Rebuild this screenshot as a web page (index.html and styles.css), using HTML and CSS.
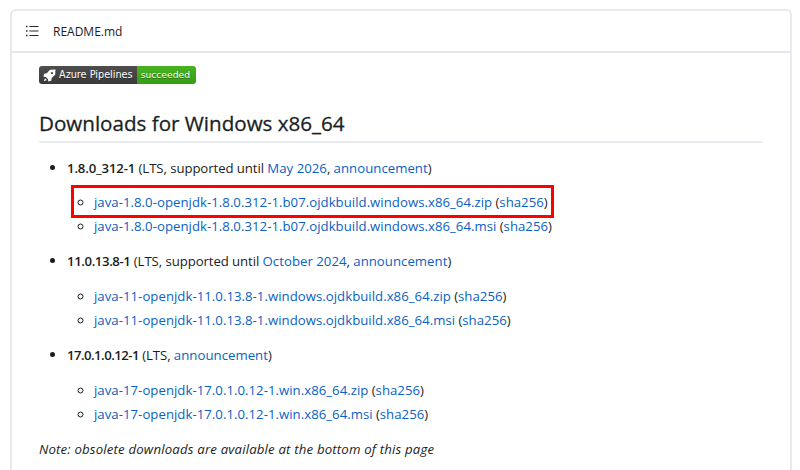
FILE: index.html
```html
<!DOCTYPE html>
<html lang="en">
<head>
<meta charset="utf-8">
<title>README.md</title>
<link rel="stylesheet" href="styles.css">
</head>
<body>
<div class="box">
  <div class="box-header">
    <svg class="toc" width="14" height="14" viewBox="0 0 14 14"><path d="M1 2.500h1.500M1 7h1.500M1 11.500h1.500" stroke="#24292f" stroke-width="1.400" fill="none"/><path d="M4.500 2.500h9M4.500 7h9M4.500 11.500h9" stroke="#24292f" stroke-width="1.200" fill="none"/></svg>
    <span class="fname">README.md</span>
  </div>
  <div class="readme">
    <div class="badge">
      <span class="badge-l"><svg class="rocket" width="13" height="13" viewBox="0 0 13 13"><path d="M12.500 .5 7 .8 3.800 4.300 1 4.800 .5 7.800l2.300.2 2.200 2.200.2 2.300 3-.7.5-2.700 3.500-3.300zM9 3a1.100 1.100 0 1 1 0 2.200A1.100 1.100 0 0 1 9 3zM2 9.200 .8 12.200l3-1.200z" fill="#fff" fill-rule="evenodd"/></svg>Azure Pipelines</span><span class="badge-r">succeeded</span>
    </div>
    <h2>Downloads for Windows x86_64</h2>
    <ul class="top">
      <li><strong class="ver-first">1.8.0_312-1</strong> (LTS, supported until <a href="#">May 2026</a>, <a href="#">announcement</a>)
        <ul class="tight">
          <li class="marked"><a href="#">java-1.8.0-openjdk-1.8.0.312-1.b07.ojdkbuild.windows.x86_64.zip</a> (<a href="#">sha256</a>)</li>
          <li><a href="#">java-1.8.0-openjdk-1.8.0.312-1.b07.ojdkbuild.windows.x86_64.msi</a> (<a href="#">sha256</a>)</li>
        </ul>
      </li>
      <li><strong class="ver">11.0.13.8-1</strong> (LTS, supported until <a href="#">October 2024</a>, <a href="#">announcement</a>)
        <ul>
          <li><a href="#">java-11-openjdk-11.0.13.8-1.windows.ojdkbuild.x86_64.zip</a> (<a href="#">sha256</a>)</li>
          <li><a href="#">java-11-openjdk-11.0.13.8-1.windows.ojdkbuild.x86_64.msi</a> (<a href="#">sha256</a>)</li>
        </ul>
      </li>
      <li><strong class="ver-last">17.0.1.0.12-1</strong> (LTS, <a href="#">announcement</a>)
        <ul>
          <li><a href="#">java-17-openjdk-17.0.1.0.12-1.win.x86_64.zip</a> (<a href="#">sha256</a>)</li>
          <li><a href="#">java-17-openjdk-17.0.1.0.12-1.win.x86_64.msi</a> (<a href="#">sha256</a>)</li>
        </ul>
      </li>
    </ul>
    <p class="note"><em>Note: obsolete downloads are available at the bottom of this page</em></p>
  </div>
</div>
</body>
</html>
```
FILE: styles.css
```css
html, body { margin: 0; padding: 0; background: #fff; height: 470px; overflow: hidden; }
body { font-family: "Open Sans", "Noto Sans", sans-serif; font-size: 13.2px; color: #1a1d21; letter-spacing: -0.08px; }
.box { margin: 9px 8px 0 10px; border: 2px solid #e6e9ee; border-bottom: 0; border-radius: 6px 6px 0 0; height: 461px; box-sizing: border-box; }
.box-header { height: 40px; border-bottom: 2px solid #e4e7ec; display: flex; align-items: center; padding-left: 13px; }
.toc { margin-right: 14px; }
.fname { font-size: 12px; letter-spacing: 0; }
.readme { padding: 13px 27px 0 27px; }
.badge { display: inline-flex; height: 18px; border-radius: 3px; overflow: hidden; font-family: "DejaVu Sans", sans-serif; font-size: 9.700px; line-height: 18px; color: #fff; letter-spacing: 0; vertical-align: top; text-shadow: 0 1px 0 rgba(0, 0, 0, 0.4); }
.badge-l { background: linear-gradient(#4e4e4e, #3a3a3a); padding: 0 4px 0 4px; display: flex; align-items: center; gap: 3px; }
.badge-r { background: linear-gradient(#49b322, #359c14); padding: 0 6px 0 4px; font-size: 9.200px; }
h2 { margin: 24px 0 0; padding-bottom: 3px; font-size: 20.600px; font-weight: 500; -webkit-text-stroke: 0.300px #1b1f24; line-height: 30px; border-bottom: 2px solid #e8ebef; color: #1b1f24; letter-spacing: 0; }
a { color: #0a5fc4; text-decoration: none; letter-spacing: 0.030px; }
ul { margin: 0; padding: 0 0 0 28px; }
.top { margin-top: 13px; }
.top > li { line-height: 24px; margin-bottom: 11px; }
.top > li::marker { font-size: 14px; }
.top ul { list-style: circle; margin-top: 11px; padding-left: 27px; }
.top ul.tight { margin-top: 10px; }
.top ul li { line-height: 24px; }
strong { font-weight: 600; }
.ver { letter-spacing: -0.400px; }
.ver-first { letter-spacing: -0.150px; }
.ver-last { letter-spacing: -0.550px; }
.marked { position: relative; }
.marked::after { content: ""; position: absolute; left: -23px; top: -5px; width: 477px; height: 27px; border: 3px solid #f00; pointer-events: none; }
.note { margin: 11px 0 0; line-height: 24px; letter-spacing: 0.180px; }
```
